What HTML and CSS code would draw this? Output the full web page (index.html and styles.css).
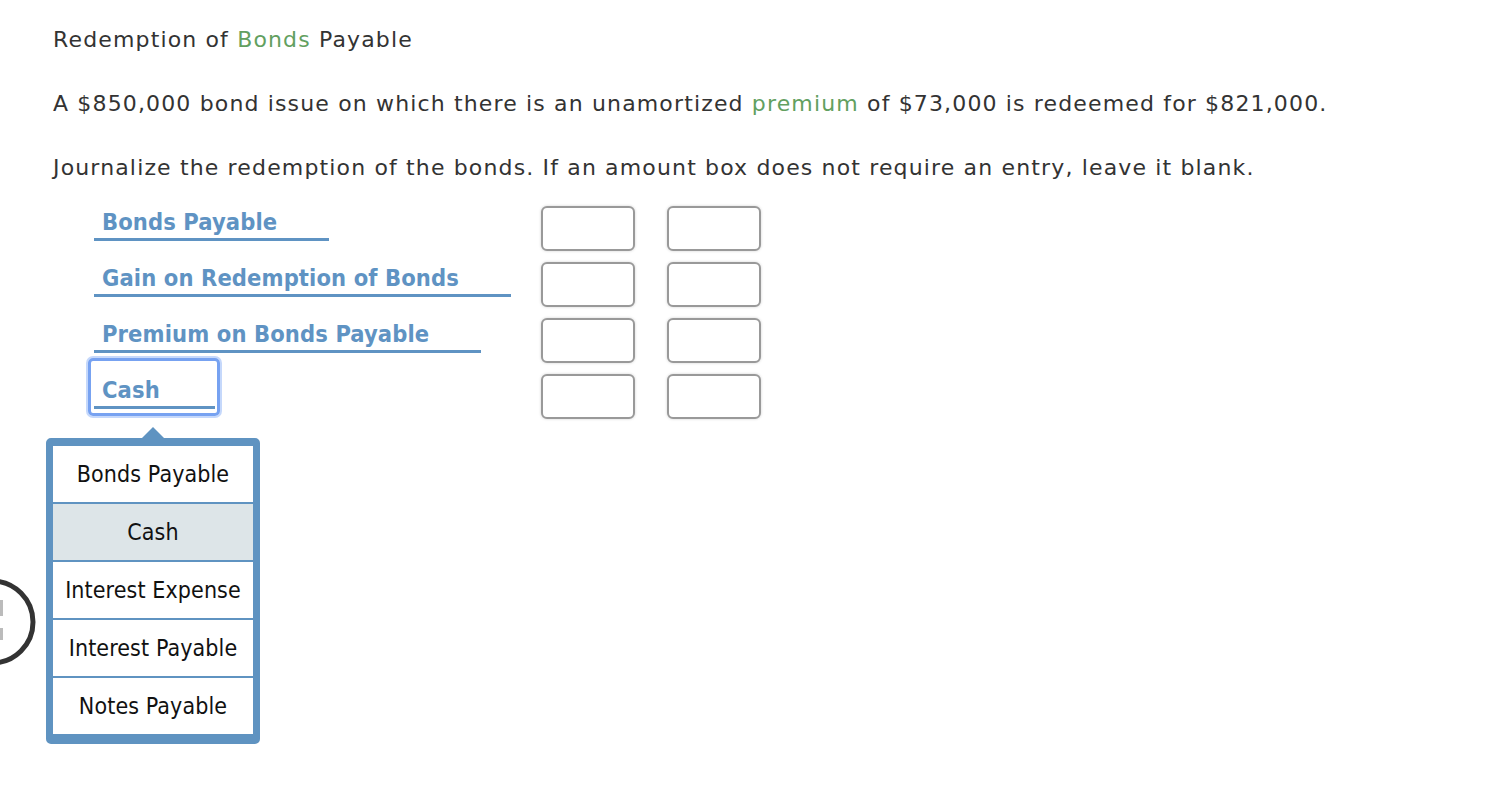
FILE: index.html
```html
<!DOCTYPE html>
<html lang="en">
<head>
    <meta charset="UTF-8">
    <meta name="viewport" content="width=device-width, initial-scale=1.0">
    <title>Redemption of Bonds Payable</title>
    <link rel="stylesheet" href="styles.css">
</head>
<body>
    <div class="question">
        <p class="title">Redemption of <span class="term">Bonds</span> Payable</p>
        <p class="text">A $850,000 bond issue on which there is an unamortized <span class="term">premium</span> of $73,000 is redeemed for $821,000.</p>
        <p class="text">Journalize the redemption of the bonds. If an amount box does not require an entry, leave it blank.</p>

        <div class="journal">
            <div class="account"><span class="pick">Bonds Payable</span></div>
            <input class="amount" type="text">
            <input class="amount" type="text">

            <div class="account"><span class="pick">Gain on Redemption of Bonds</span></div>
            <input class="amount" type="text">
            <input class="amount" type="text">

            <div class="account"><span class="pick">Premium on Bonds Payable</span></div>
            <input class="amount" type="text">
            <input class="amount" type="text">

            <div class="account">
                <span class="ring"><span class="pick">Cash</span></span>
            </div>
            <input class="amount" type="text">
            <input class="amount" type="text">
        </div>

        <ul class="menu">
            <li>Bonds Payable</li>
            <li class="active">Cash</li>
            <li>Interest Expense</li>
            <li>Interest Payable</li>
            <li>Notes Payable</li>
        </ul>
    </div>

    <svg class="helper" width="40" height="100" viewBox="0 0 40 100">
        <circle cx="-8" cy="50" r="41" fill="#fff" stroke="#333" stroke-width="5"/>
        <rect x="0" y="28" width="3" height="16" fill="#bbb"/>
        <rect x="0" y="56" width="3" height="12" fill="#bbb"/>
    </svg>
</body>
</html>
```

FILE: styles.css
```css
body {
    margin: 0;
    background: #fff;
    font-family: "DejaVu Sans", Verdana, sans-serif;
    color: #333;
}
.question {
    padding: 27px 0 40px 53px;
}
.title, .text {
    margin: 0 0 38px;
    font-size: 22px;
    line-height: 26px;
    letter-spacing: 1.15px;
}
.term {
    color: #62a05f;
}
.journal {
    display: grid;
    grid-template-columns: 415px 94px 94px;
    grid-auto-rows: 45px;
    column-gap: 32px;
    row-gap: 11px;
    margin-top: -13px;
    margin-left: 41px;
}
.account {
    display: flex;
    align-items: flex-start;
    white-space: nowrap;
}
.pick {
    display: block;
    box-sizing: border-box;
    height: 35px;
    padding: 1px 52px 0 8px;
    line-height: 30px;
    border-bottom: 3px solid #5f93c3;
    color: #5f93c3;
    font-weight: bold;
    font-size: 23.5px;
    font-stretch: condensed;
    letter-spacing: 0.1px;
}
.ring {
    display: block;
    margin: -16px 0 0 -6px;
    padding: 13px 2px 4px 3px;
    border: 3px solid #77a2f1;
    border-radius: 5px;
    box-shadow: 0 0 0 2px #c5d8fb;
}
.ring .pick {
    padding-right: 55px;
}
.amount {
    box-sizing: border-box;
    width: 94px;
    height: 45px;
    margin: 0;
    border: 2px solid #999;
    border-radius: 6px;
    box-shadow: 0 0 3px rgba(0, 0, 0, 0.18);
    background: #fff;
}
.menu {
    position: relative;
    width: 200px;
    margin: 19px 0 0 -7px;
    padding: 0;
    list-style: none;
    border: 7px solid #5f93c1;
    border-top-width: 8px;
    border-bottom-width: 10px;
    border-radius: 5px;
    background: #5f93c1;
    font-size: 23px;
    font-stretch: condensed;
    letter-spacing: 0.1px;
    color: #111;
}
.menu::before {
    content: "";
    position: absolute;
    left: 89px;
    top: -19px;
    border: 11px solid transparent;
    border-bottom: 11px solid #5f93c1;
    border-top: 0;
}
.menu li {
    height: 56px;
    line-height: 56px;
    margin-top: 2px;
    text-align: center;
    background: #fff;
}
.menu li:first-child {
    margin-top: 0;
}
.menu li.active {
    background: #dde5e8;
}
.helper {
    position: absolute;
    left: 0;
    top: 572px;
}
```
